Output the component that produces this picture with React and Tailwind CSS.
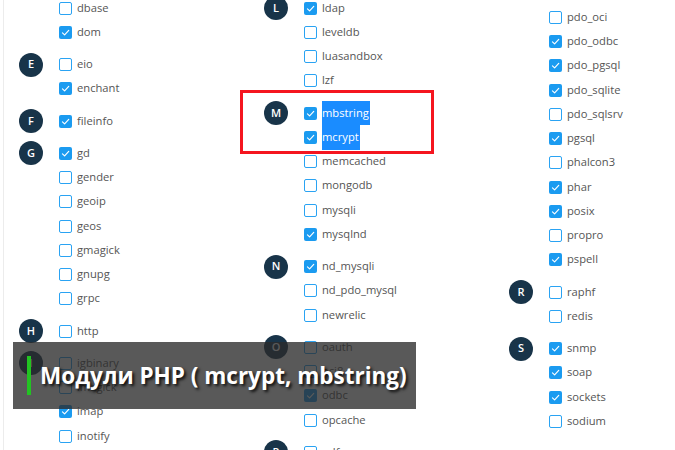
import React from "react";

const col1 = [
  { letter: null, items: [["dbase", 0], ["dom", 1]] },
  { letter: "E", items: [["eio", 0], ["enchant", 1]] },
  { letter: "F", items: [["fileinfo", 1]] },
  {
    letter: "G",
    items: [["gd", 1], ["gender", 0], ["geoip", 0], ["geos", 0], ["gmagick", 0], ["gnupg", 0], ["grpc", 0]],
  },
  { letter: "H", items: [["http", 0]] },
  { letter: "I", items: [["igbinary", 0], ["imagick", 0], ["imap", 1], ["inotify", 0]] },
];

const col2 = [
  { letter: "L", items: [["ldap", 1], ["leveldb", 0], ["luasandbox", 0], ["lzf", 0]] },
  {
    letter: "M",
    items: [["mbstring", 1, true], ["mcrypt", 1, true], ["memcached", 0], ["mongodb", 0], ["mysqli", 0], ["mysqlnd", 1]],
  },
  { letter: "N", items: [["nd_mysqli", 1], ["nd_pdo_mysql", 0], ["newrelic", 0]] },
  { letter: "O", items: [["oauth", 0], ["oci8", 0], ["odbc", 1], ["opcache", 0]] },
  { letter: "P", items: [["pdf", 0]] },
];

const col3 = [
  {
    letter: null,
    items: [
      ["pdo_mysql", 1], ["pdo_oci", 0], ["pdo_odbc", 1], ["pdo_pgsql", 1], ["pdo_sqlite", 1], ["pdo_sqlsrv", 0],
      ["pgsql", 1], ["phalcon3", 0], ["phar", 1], ["posix", 1], ["propro", 0], ["pspell", 1],
    ],
  },
  { letter: "R", items: [["raphf", 0], ["redis", 0]] },
  { letter: "S", items: [["snmp", 1], ["soap", 1], ["sockets", 1], ["sodium", 0]] },
];

function Box({ checked }) {
  if (checked) {
    return (
      <span className="flex h-[13px] w-[13px] shrink-0 items-center justify-center rounded-[2px] bg-[#1b9bf0]">
        <svg width="9" height="9" viewBox="0 0 10 10" fill="none">
          <polyline points="1.6,5.4 4,7.6 8.6,2.6" stroke="white" strokeWidth="1.3" strokeLinecap="round" strokeLinejoin="round" />
        </svg>
      </span>
    );
  }
  return <span className="h-[13px] w-[13px] shrink-0 rounded-[2px] border-[1.6px] border-[#2aa3f3] bg-white" />;
}

function Group({ letter, items }) {
  return (
    <div className="flex items-start">
      <div className="flex h-[24.25px] w-[24px] shrink-0 items-center justify-center">
        {letter && (
          <span className="flex h-[24px] w-[24px] items-center justify-center rounded-full bg-[#183449] text-[11px] font-semibold text-white">
            {letter}
          </span>
        )}
      </div>
      <div className="ml-[16px] flex flex-col">
        {items.map(([name, checked, sel]) => (
          <div key={name} className="flex h-[24.25px] items-center gap-[5px]">
            <Box checked={checked} />
            {sel ? (
              <span className="flex h-[24.25px] items-center bg-[#1a8cff] pr-[1px] text-[11.2px] text-white">{name}</span>
            ) : (
              <span className="text-[11.2px] text-[#555]">{name}</span>
            )}
          </div>
        ))}
      </div>
    </div>
  );
}

function Column({ groups, offset }) {
  return (
    <div className={`flex w-[245px] shrink-0 flex-col gap-[8px] ${offset}`}>
      {groups.map((g, i) => (
        <Group key={i} {...g} />
      ))}
    </div>
  );
}

export default function App() {
  return (
    <div
      className="relative h-[450px] w-[675px] overflow-hidden bg-white pl-[3px]"
      style={{ fontFamily: '"Open Sans", "Noto Sans", sans-serif' }}
    >
      <div className="flex h-full border-l border-[#ececec] pl-[15px]">
        <Column groups={col1} offset="mt-[-4px]" />
        <Column groups={col2} offset="mt-[-4px]" />
        <Column groups={col3} offset="mt-[-19px]" />
      </div>

      <div className="absolute left-[240px] top-[90px] h-[64px] w-[194px] border-[3px] border-[#f5151f]" />

      <div className="absolute left-[13px] top-[342px] flex h-[67px] w-[403px] items-center bg-[rgba(42,42,42,0.78)] pl-[14px]">
        <span className="h-[39px] w-[4px] bg-[#22c422]" />
        <span className="ml-[9px] mt-[2px] whitespace-nowrap text-[22.5px] font-bold leading-none text-white [text-shadow:2px_2px_3px_rgba(0,0,0,0.85)]">
          Модули PHP ( mcrypt, mbstring)
        </span>
      </div>
    </div>
  );
}
